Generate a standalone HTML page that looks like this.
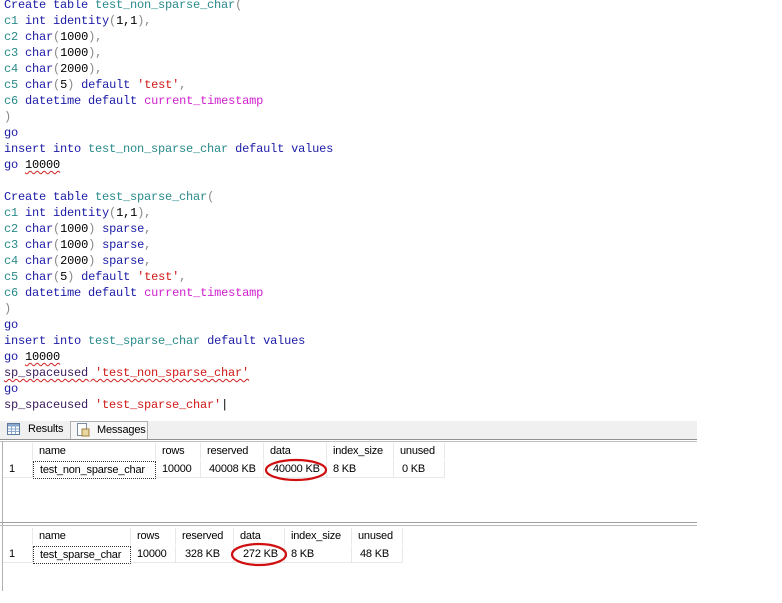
<!DOCTYPE html>
<html><head><meta charset="utf-8"><style>
body{margin:0;width:782px;height:603px;background:#fff;position:relative;overflow:hidden;font-family:"Liberation Sans",sans-serif}
.code{position:absolute;left:4px;top:-3px;font-family:"Liberation Mono",monospace;font-size:12px;line-height:16px;white-space:pre;color:#000;letter-spacing:-0.2px}
.k{color:#1a1aa6}.t{color:#2a8a8a}.s{color:#d01818}.f{color:#d020d0}.g{color:#888}.sp{color:#3a1a5a}
.w{text-decoration:underline wavy #d02020;text-decoration-thickness:1px;text-underline-offset:2px}
.tabs{position:absolute;left:0;top:421px;width:697px;height:18px;background:#f0f0f0}
.line{position:absolute;left:0;width:697px;height:1px;background:#a0a0a0}
.c{position:absolute;font-size:11px;letter-spacing:-0.2px;height:17px;line-height:17px;box-sizing:border-box;border-right:1px solid #e8e8e8;padding-left:6px;color:#000;white-space:nowrap;overflow:hidden}
.h{background:#fff}
.r{border-bottom:1px solid #e8e8e8}
</style></head><body>
<div class="code"><span class="k">Create table</span> <span class="t">test_non_sparse_char</span><span class="g">(</span>
<span class="t">c1</span> <span class="k">int identity</span><span class="g">(</span>1,1<span class="g">),</span>
<span class="t">c2</span> <span class="k">char</span><span class="g">(</span>1000<span class="g">),</span>
<span class="t">c3</span> <span class="k">char</span><span class="g">(</span>1000<span class="g">),</span>
<span class="t">c4</span> <span class="k">char</span><span class="g">(</span>2000<span class="g">),</span>
<span class="t">c5</span> <span class="k">char</span><span class="g">(</span>5<span class="g">)</span> <span class="k">default</span> <span class="s">'test'</span><span class="g">,</span>
<span class="t">c6</span> <span class="k">datetime default</span> <span class="f">current_timestamp</span>
<span class="g">)</span>
<span class="k">go</span>
<span class="k">insert into</span> <span class="t">test_non_sparse_char</span> <span class="k">default values</span>
<span class="k">go</span> <span class="w">10000</span>

<span class="k">Create table</span> <span class="t">test_sparse_char</span><span class="g">(</span>
<span class="t">c1</span> <span class="k">int identity</span><span class="g">(</span>1,1<span class="g">),</span>
<span class="t">c2</span> <span class="k">char</span><span class="g">(</span>1000<span class="g">)</span> <span class="k">sparse</span><span class="g">,</span>
<span class="t">c3</span> <span class="k">char</span><span class="g">(</span>1000<span class="g">)</span> <span class="k">sparse</span><span class="g">,</span>
<span class="t">c4</span> <span class="k">char</span><span class="g">(</span>2000<span class="g">)</span> <span class="k">sparse</span><span class="g">,</span>
<span class="t">c5</span> <span class="k">char</span><span class="g">(</span>5<span class="g">)</span> <span class="k">default</span> <span class="s">'test'</span><span class="g">,</span>
<span class="t">c6</span> <span class="k">datetime default</span> <span class="f">current_timestamp</span>
<span class="g">)</span>
<span class="k">go</span>
<span class="k">insert into</span> <span class="t">test_sparse_char</span> <span class="k">default values</span>
<span class="k">go</span> <span class="w">10000</span>
<span class="w"><span class="sp">sp_spaceused</span> <span class="s">'test_non_sparse_char'</span></span>
<span class="k">go</span>
<span class="sp">sp_spaceused</span> <span class="s">'test_sparse_char'</span>|</div>

<div class="tabs"></div>
<svg style="position:absolute;left:7px;top:423px" width="13" height="12"><rect x="0.5" y="0.5" width="12" height="11" fill="#fff" stroke="#5a7aa0"/><rect x="1" y="1" width="11" height="2.5" fill="#8aa8cc"/><path d="M4.5 1v10M8.5 1v10M1 6h11M1 8.5h11" stroke="#8aa8cc"/></svg>
<div style="position:absolute;left:28px;top:423px;font-size:11px;letter-spacing:-0.2px">Results</div>
<div style="position:absolute;left:70px;top:421px;width:78px;height:19px;background:#f7f7f7;border:1px solid #b0b0b0;border-bottom:none;box-sizing:border-box"></div>
<svg style="position:absolute;left:76px;top:423px" width="14" height="14"><rect x="1.5" y="0.5" width="9" height="12" fill="#fff" stroke="#7a8aa0"/><rect x="6" y="6" width="7" height="7" fill="#e8d8a0" stroke="#a08040"/></svg>
<div style="position:absolute;left:97px;top:424px;font-size:11px;letter-spacing:-0.2px">Messages</div>

<div class="line" style="top:439px;background:#909090"></div>
<div class="line" style="top:441px;background:#c0c0c0"></div>
<div style="position:absolute;left:2px;top:441px;width:1px;height:150px;background:#b0b0b0"></div>

<div class="c h" style="left:3px;top:443px;width:30px"></div>
<div class="c h" style="left:33px;top:443px;width:123px">name</div>
<div class="c h" style="left:156px;top:443px;width:45px">rows</div>
<div class="c h" style="left:201px;top:443px;width:63px">reserved</div>
<div class="c h" style="left:264px;top:443px;width:63px">data</div>
<div class="c h" style="left:327px;top:443px;width:67px">index_size</div>
<div class="c h" style="left:394px;top:443px;width:51px">unused</div>
<div class="c r" style="left:3px;top:461px;width:30px">1</div>
<div class="c r" style="left:33px;top:461px;width:123px;border:1px dotted #333;height:18px">test_non_sparse_char</div>
<div class="c r" style="left:156px;top:461px;width:45px;padding-left:6px">10000</div>
<div class="c r" style="left:201px;top:461px;width:63px;padding-left:8px">40008 KB</div>
<div class="c r" style="left:264px;top:461px;width:63px;padding-left:9px">40000 KB</div>
<div class="c r" style="left:327px;top:461px;width:67px">8 KB</div>
<div class="c r" style="left:394px;top:461px;width:51px;padding-left:8px">0 KB</div>
<svg style="position:absolute;left:263px;top:457px" width="66" height="26"><ellipse cx="33" cy="13" rx="30" ry="10" fill="none" stroke="#d01010" stroke-width="2.2"/></svg>

<div class="line" style="top:522px;background:#a0a0a0"></div>
<div class="line" style="top:525px;background:#b8b8b8"></div>

<div class="c h" style="left:3px;top:528px;width:30px"></div>
<div class="c h" style="left:33px;top:528px;width:98px">name</div>
<div class="c h" style="left:131px;top:528px;width:45px">rows</div>
<div class="c h" style="left:176px;top:528px;width:58px">reserved</div>
<div class="c h" style="left:234px;top:528px;width:51px">data</div>
<div class="c h" style="left:285px;top:528px;width:67px">index_size</div>
<div class="c h" style="left:352px;top:528px;width:51px">unused</div>
<div class="c r" style="left:3px;top:546px;width:30px">1</div>
<div class="c r" style="left:33px;top:546px;width:98px;border:1px dotted #333;height:18px">test_sparse_char</div>
<div class="c r" style="left:131px;top:546px;width:45px">10000</div>
<div class="c r" style="left:176px;top:546px;width:58px;padding-left:9px">328 KB</div>
<div class="c r" style="left:234px;top:546px;width:51px;padding-left:9px">272 KB</div>
<div class="c r" style="left:285px;top:546px;width:67px">8 KB</div>
<div class="c r" style="left:352px;top:546px;width:51px;padding-left:8px">48 KB</div>
<svg style="position:absolute;left:229px;top:541px" width="60" height="27"><ellipse cx="30" cy="13.5" rx="27" ry="10.5" fill="none" stroke="#d01010" stroke-width="2.2"/></svg>
</body></html>
